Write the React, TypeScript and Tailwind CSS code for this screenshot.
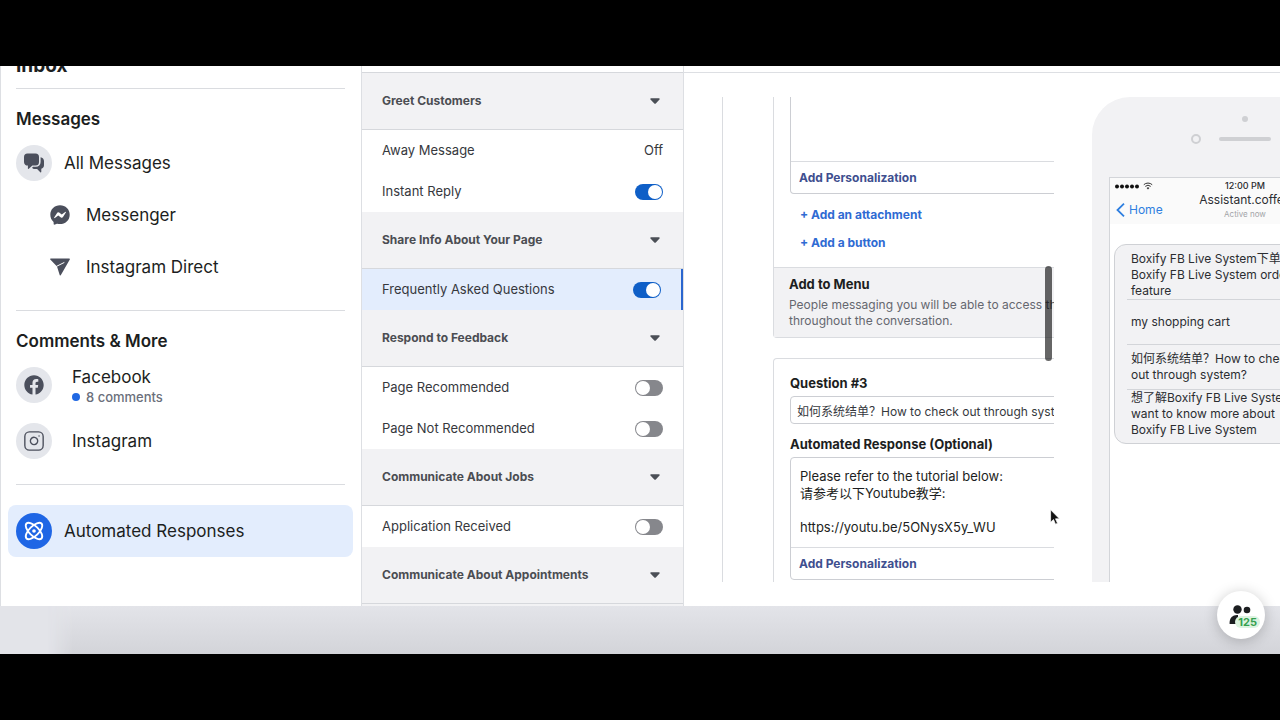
import { useState, type ReactNode } from "react";
import { Atom, Instagram } from "lucide-react";
import { FaFacebook, FaFacebookMessenger } from "react-icons/fa";

interface ResponseItem {
  id: string;
  label: string;
  status?: string;
  enabled?: boolean;
  selected?: boolean;
}

interface ResponseGroup {
  title: string;
  items: ResponseItem[];
}

const GROUPS: ResponseGroup[] = [
  {
    title: "Greet Customers",
    items: [
      { id: "away", label: "Away Message", status: "Off" },
      { id: "instant", label: "Instant Reply", enabled: true },
    ],
  },
  {
    title: "Share Info About Your Page",
    items: [
      {
        id: "faq",
        label: "Frequently Asked Questions",
        enabled: true,
        selected: true,
      },
    ],
  },
  {
    title: "Respond to Feedback",
    items: [
      { id: "recommended", label: "Page Recommended", enabled: false },
      { id: "not-recommended", label: "Page Not Recommended", enabled: false },
    ],
  },
  {
    title: "Communicate About Jobs",
    items: [
      { id: "application", label: "Application Received", enabled: false },
    ],
  },
  { title: "Communicate About Appointments", items: [] },
];

const MENU_QUESTIONS: string[][] = [
  ["Boxify FB Live System下单功能", "Boxify FB Live System order", "feature"],
  ["my shopping cart"],
  ["如何系统结单？How to check", "out through system?"],
  ["想了解Boxify FB Live System I", "want to know more about", "Boxify FB Live System"],
];

function ChatsIcon() {
  return (
    <svg viewBox="0 0 20 20" className="size-5" fill="#4b4f5c" aria-hidden="true">
      <path d="M3.5 0.5h8a3.5 3.5 0 0 1 3.5 3.5v5a3.5 3.5 0 0 1-3.5 3.5H8.4l-3.6 3.3c-.4.3-.9.1-.9-.4v-2.9A3.5 3.5 0 0 1 0 9V4A3.5 3.5 0 0 1 3.5.5z" />
      <path d="M16.6 4.2c2 .4 3.4 1.9 3.4 3.9v4.2c0 1.9-1.1 3.2-2.7 3.5v3c0 .6-.6.8-1 .4l-3.2-3.1h-2.3c-1.2 0-2.2-.5-2.8-1.3l1.1-1h2.8c2.7 0 4.7-2 4.7-4.8z" />
    </svg>
  );
}

function DirectIcon() {
  return (
    <svg viewBox="0 0 20 18" className="h-[18px] w-5" aria-hidden="true">
      <path
        d="M.8.4h18.4c.6 0 .9.6.6 1.1l-8.9 15.6c-.3.5-1 .4-1.2-.2L7 8.600.3 1.500C-.2 1 .1.400.8.400z"
        fill="#4b4f5c"
      />
      <path d="M6.800 8.200 14 4.600" stroke="#fff" strokeWidth="1" strokeLinecap="round" />
    </svg>
  );
}

function Caret() {
  return (
    <svg viewBox="0 0 10 6" className="h-1.5 w-2.5" aria-hidden="true">
      <path d="M1 .3h8c.7 0 1 .8.500 1.300L5.800 5.400c-.4.4-1.100.4-1.500 0L.5 1.600C0 1.100.300.300 1 .3z" fill="#4b4f56" />
    </svg>
  );
}

function RoundIcon({ children }: { children: ReactNode }) {
  return (
    <span className="flex size-9 shrink-0 items-center justify-center rounded-full bg-[#e4e6eb] text-[#4b4f5c]">
      {children}
    </span>
  );
}

function Sidebar() {
  return (
    <nav className="w-[362px] shrink-0 overflow-hidden border-x border-[#dddfe3] pr-2 pl-[7px] text-[17px] leading-6 text-[#1c1e21]">
      <h1 className="-mt-3 px-2 text-[19px] leading-6 font-bold">Inbox</h1>
      <div className="mx-2 mt-2.5 border-t border-[#dadce0]" />

      <h2 className="mt-[18px] px-2 font-semibold">Messages</h2>
      <a href="#all" className="mt-1.5 flex h-[52px] items-center gap-3 px-2">
        <RoundIcon>
          <ChatsIcon />
        </RoundIcon>
        All Messages
      </a>
      <a href="#messenger" className="flex h-[52px] items-center gap-4 pl-[42px]">
        <FaFacebookMessenger className="size-5 text-[#4b4f5c]" />
        Messenger
      </a>
      <a href="#direct" className="flex h-[52px] items-center gap-4 pl-[42px]">
        <DirectIcon />
        Instagram Direct
      </a>

      <div className="mx-2 mt-[17px] border-t border-[#dadce0]" />
      <h2 className="mt-[18px] px-2 font-semibold">Comments &amp; More</h2>
      <a href="#facebook" className="mt-1 flex h-14 items-center gap-5 px-2">
        <RoundIcon>
          <FaFacebook className="size-5" />
        </RoundIcon>
        <span className="pt-1">
          <span className="block leading-5">Facebook</span>
          <span className="flex items-center gap-1.5 text-[13px] leading-5 font-medium text-[#6b6f7b]">
            <span className="size-2 rounded-full bg-[#2068e3]" />8 comments
          </span>
        </span>
      </a>
      <a href="#instagram" className="flex h-14 items-center gap-5 px-2">
        <RoundIcon>
          <Instagram className="size-[22px]" strokeWidth={1.5} />
        </RoundIcon>
        Instagram
      </a>

      <div className="mx-2 mt-[15px] border-t border-[#dadce0]" />
      <a
        href="#automated"
        aria-current="page"
        className="mt-5 flex h-[52px] items-center gap-3 rounded-lg bg-[#e3edfd] px-2"
      >
        <span className="flex size-9 items-center justify-center rounded-full bg-[#1f66e5] text-white">
          <Atom className="size-[22px]" strokeWidth={2} />
        </span>
        Automated Responses
      </a>
    </nav>
  );
}

function ResponseRow({ item }: { item: ResponseItem }) {
  const [on, setOn] = useState(item.enabled ?? false);

  return (
    <li
      className={
        item.selected
          ? "flex h-[41px] items-center justify-between border-r-2 border-[#2a66cf] bg-[#e3edfd] px-5"
          : "flex h-[41px] items-center justify-between px-5"
      }
    >
      <label htmlFor={item.id} className="pb-0.5">
        {item.label}
      </label>
      {item.status ? (
        <output id={item.id} className="pb-0.5">
          {item.status}
        </output>
      ) : (
        <input
          id={item.id}
          type="checkbox"
          role="switch"
          checked={on}
          onChange={(e) => setOn(e.target.checked)}
          className="flex h-4 w-7 cursor-pointer appearance-none rounded-full bg-[#86878c] p-px before:size-3.5 before:rounded-full before:bg-white checked:justify-end checked:bg-[#0f5fc7]"
        />
      )}
    </li>
  );
}

function ResponseList() {
  return (
    <section className="w-[322px] shrink-0 overflow-hidden border-r border-[#dddfe3] bg-[#f2f2f4] text-[13px] leading-5 text-[#36383d]">
      <div className="h-[7px] border-b border-[#d6d8dc] bg-white" />
      {GROUPS.map((group) => (
        <div key={group.title}>
          <button
            type="button"
            className="flex h-[57px] w-full items-center justify-between border-b border-[#d6d8dc] px-5 text-[12px] font-bold text-[#4b4d52]"
          >
            {group.title}
            <span className="pr-[3px]">
              <Caret />
            </span>
          </button>
          <ul className="bg-white">
            {group.items.map((item) => (
              <ResponseRow key={item.id} item={item} />
            ))}
          </ul>
        </div>
      ))}
    </section>
  );
}

function PersonalizationButton() {
  return (
    <button
      type="button"
      className="flex h-8 w-full items-center border-t border-[#dadce0] px-2 text-[12px] font-bold text-[#3e4f8f]"
    >
      Add Personalization
    </button>
  );
}

function QuestionEditor() {
  return (
    <div className="relative min-w-[332px] flex-1 overflow-hidden border-l border-[#dadce0] pl-[50px] text-[13px] leading-5 text-[#1c1e21]">
      <div className="min-w-[360px] rounded-b border border-t-0 border-[#dadce0]">
        <div className="mx-4 rounded-b-sm border border-t-0 border-[#ccced3]">
          <textarea aria-label="Automated response" className="block h-16 w-full resize-none" />
          <PersonalizationButton />
        </div>
        <div className="mt-[7px] flex flex-col items-start px-[26px] text-[12px] font-bold text-[#2f6bd3]">
          <button type="button" className="h-7">
            + Add an attachment
          </button>
          <button type="button" className="h-7">
            + Add a button
          </button>
        </div>
        <div className="mt-2.5 h-[70px] border-t border-[#dadce0] bg-[#f2f2f4] px-[15px] pt-1.5">
          <h3 className="font-bold">Add to Menu</h3>
          <p className="mt-[3px] text-[12px] leading-4 whitespace-nowrap text-[#65676f]">
            People messaging you will be able to access this
            <br />
            throughout the conversation.
          </p>
        </div>
      </div>

      <div className="mt-5 min-w-[360px] rounded-t border border-b-0 border-[#dadce0] px-4 pt-3.5 pb-5">
        <label htmlFor="question" className="block font-bold">
          Question #3
        </label>
        <input
          id="question"
          defaultValue="如何系统结单？How to check out through system?"
          className="mt-[3px] block h-7 w-full rounded-sm border border-[#ccced3] px-1.5 text-[12px] text-[#36383d]"
        />
        <label htmlFor="response" className="mt-2.5 block font-bold">
          Automated Response (Optional)
        </label>
        <div className="mt-[3px] rounded-sm border border-[#ccced3]">
          <textarea
            id="response"
            defaultValue={"Please refer to the tutorial below:\n请参考以下Youtube教学:\n\nhttps://youtu.be/5ONysX5y_WU"}
            className="block h-[89px] w-full resize-none overflow-hidden px-[9px] pt-2.5 leading-[17px]"
          />
          <PersonalizationButton />
        </div>
      </div>

      <div className="absolute top-[169px] right-0.5 h-[95px] w-[7px] rounded-full bg-black/60" />
    </div>
  );
}

function PhonePreview() {
  return (
    <div className="ml-[38px] w-[306px] shrink-0 overflow-hidden rounded-t-[38px] bg-[#f2f2f4] px-[17px]">
      <div className="flex h-20 flex-col items-center pt-[19px]">
        <span className="size-1.5 rounded-full bg-[#cfd0d3]" />
        <div className="mt-3 flex items-center gap-[18px] pr-[54px] pl-[26px]">
          <span className="size-2.5 rounded-full border-2 border-[#cfd0d3]" />
          <span className="h-1 w-[52px] rounded-full bg-[#cfd0d3]" />
        </div>
      </div>
      <div className="h-full border border-[#d3d5d9] bg-white text-[#2b2d31]">
        <div className="h-[46px] bg-[#fafafa]">
          <div className="grid h-4 grid-cols-3 items-center px-[5px] text-[9px] font-medium">
            <span className="flex items-center gap-1">
              <svg viewBox="0 0 24 5" className="h-[5px] w-6" fill="#111" aria-hidden="true">
                <circle cx="2" cy="2.5" r="2" />
                <circle cx="7" cy="2.5" r="2" />
                <circle cx="12" cy="2.5" r="2" />
                <circle cx="17" cy="2.5" r="2" />
                <circle cx="22" cy="2.5" r="2" />
              </svg>
              <svg viewBox="0 0 10 8" className="h-2 w-2.5" fill="none" stroke="#333" aria-hidden="true">
                <path d="M.8 2.700a6.200 6.200 0 0 1 8.400 0M2.300 4.400a4 4 0 0 1 5.400 0" />
                <path d="M3.600 5.900a2 2 0 0 1 2.800 0L5 7.500z" fill="#333" stroke="none" />
              </svg>
            </span>
            <span className="text-center">12:00 PM</span>
          </div>
          <div className="grid grid-cols-3 px-1.5">
            <a href="#home" className="flex items-center gap-1 pt-1 text-[12px] text-[#2f7fe0]">
              <svg viewBox="0 0 9 14" className="h-3.5 w-[9px]" fill="none" stroke="currentColor" strokeWidth="1.800" aria-hidden="true">
                <path d="M8 .7 1.500 7 8 13.300" />
              </svg>
              Home
            </a>
            <div className="flex flex-col items-center whitespace-nowrap">
              <span className="text-[12px] leading-3">Assistant.coffee</span>
              <span className="text-[8px] leading-4 text-[#a2a4a8]">Active now</span>
            </div>
          </div>
        </div>
        <ul className="mx-1 mt-5 rounded-xl border border-[#cfd1d5] bg-[#f2f2f4] pl-3 text-[12px] leading-4 whitespace-nowrap">
          {MENU_QUESTIONS.map((lines) => (
            <li
              key={lines[0]}
              className="flex min-h-[45px] flex-col justify-center border-b border-[#d3d5d9] pl-1 first:pt-1.5 last:border-b-0 last:pb-[5px]"
            >
              {lines.map((line) => (
                <span key={line}>{line}</span>
              ))}
            </li>
          ))}
        </ul>
      </div>
    </div>
  );
}

function ViewersButton() {
  return (
    <button
      type="button"
      aria-label="125 people online"
      className="absolute right-[15px] bottom-[15px] flex size-12 items-center justify-center rounded-full bg-white shadow-[0_2px_14px_rgba(0,0,0,0.22)]"
    >
      <svg viewBox="0 0 24 22" className="h-[22px] w-6" fill="#1c1e21" aria-hidden="true">
        <circle cx="8.500" cy="5.500" r="4.200" />
        <circle cx="18" cy="6" r="3.300" />
        <path d="M.6 20v-1.500c0-4.400 3-7.500 7.400-7.500h1v9z" />
      </svg>
      <span className="absolute right-[5px] bottom-[11px] rounded-full bg-[#dcf3e0] px-[3px] text-[11px] leading-3 font-bold text-[#35a04f]">
        125
      </span>
    </button>
  );
}

function Pointer() {
  return (
    <svg viewBox="0 0 10 16" className="pointer-events-none absolute top-[443px] left-[1050px] h-4 w-2.5" aria-hidden="true">
      <path
        d="M.6.8v12.400l2.900-2.700 2 4.700 2-.9-2-4.500h3.900z"
        fill="#111"
        stroke="#fff"
        strokeWidth=".7"
      />
    </svg>
  );
}

export default function App() {
  return (
    <div className="flex h-screen flex-col overflow-hidden bg-black py-[66px] font-[Inter,'Noto_Sans_CJK_SC',sans-serif]">
      <div className="relative flex min-h-0 flex-1 flex-col overflow-hidden bg-white">
        <main className="flex min-h-0 flex-1">
          <Sidebar />
          <ResponseList />
          <section className="flex min-w-0 flex-1 flex-col">
            <div className="h-[7px] shrink-0 border-b border-[#dddfe3]" />
            <div className="flex min-h-0 flex-1 overflow-hidden py-6 pl-[38px]">
              <QuestionEditor />
              <PhonePreview />
            </div>
          </section>
        </main>
        <footer className="h-12 shrink-0 bg-[#e3e4e9] pl-12">
          <div className="h-full bg-linear-to-b from-[#e3e4e9] to-[#d3d4d9] mask-l-from-98%" />
        </footer>
        <ViewersButton />
        <Pointer />
      </div>
    </div>
  );
}
